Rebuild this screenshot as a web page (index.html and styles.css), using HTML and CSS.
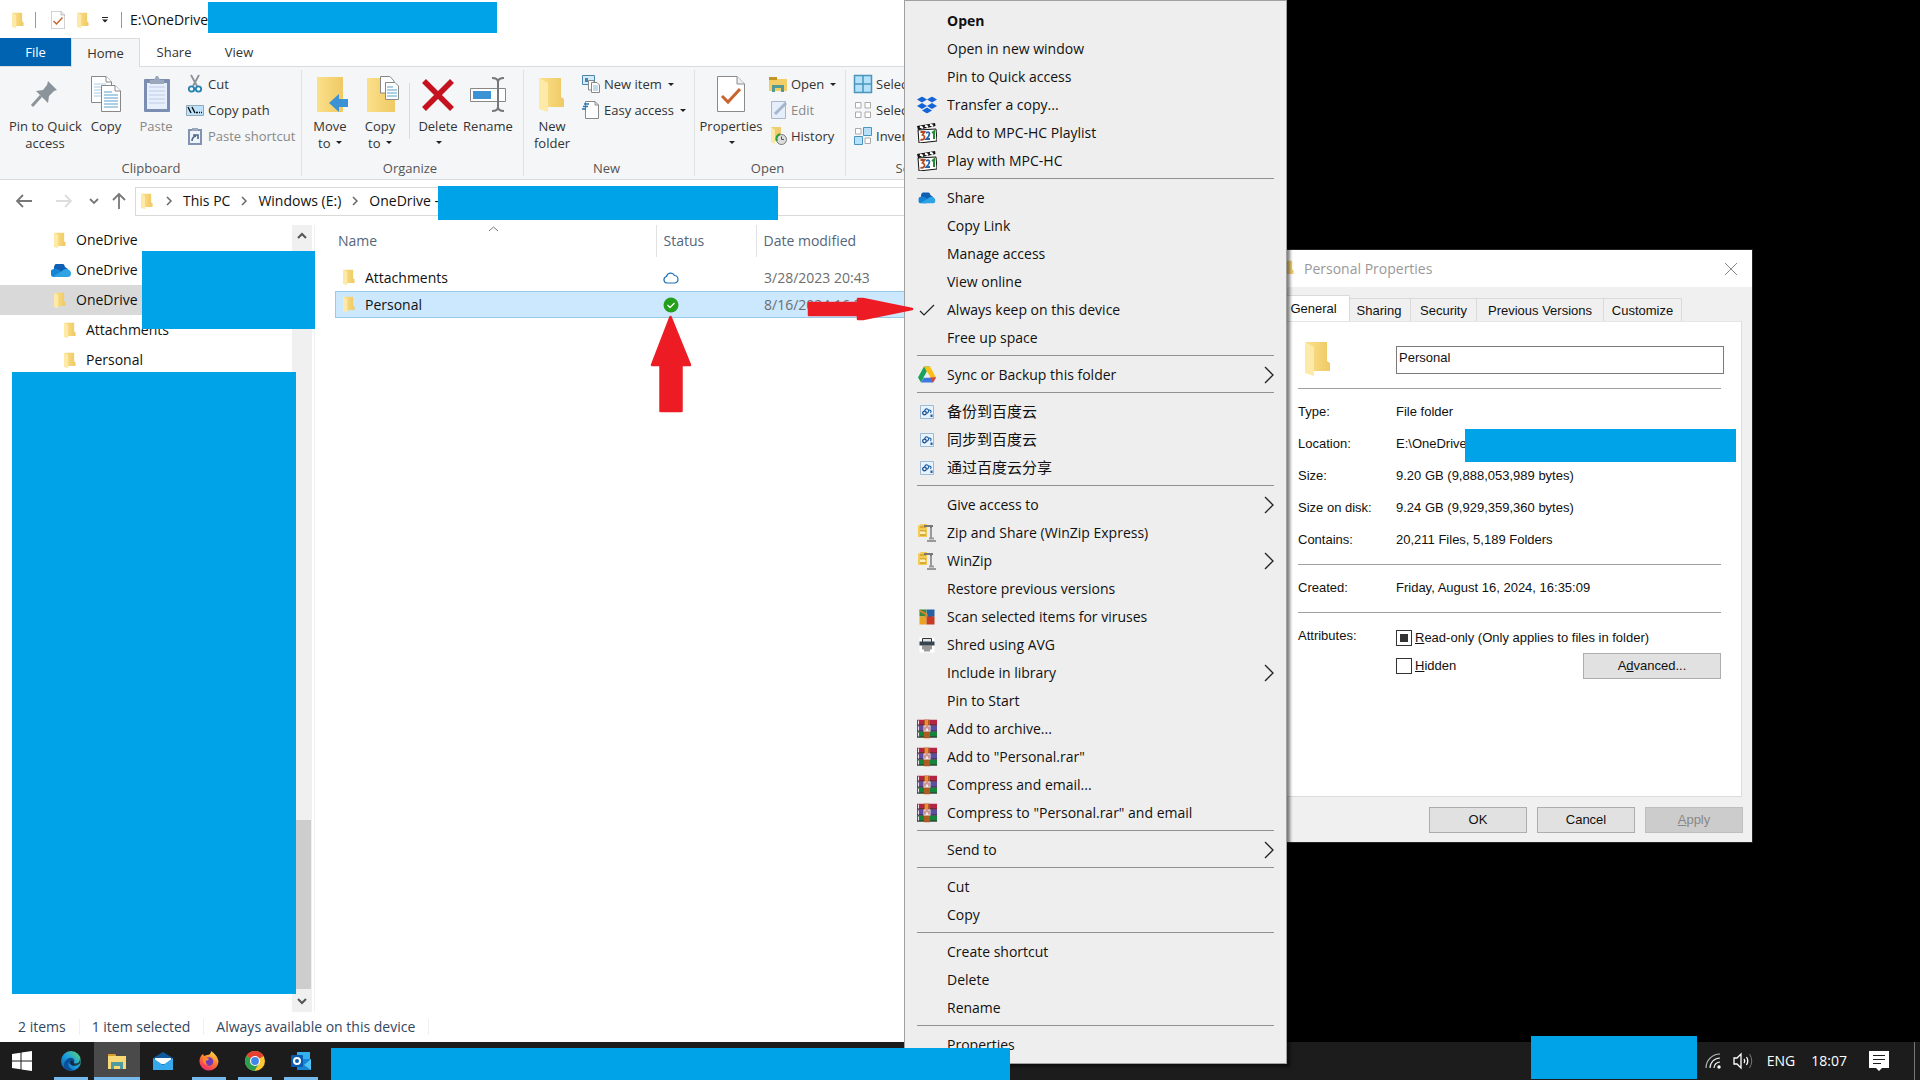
FILE: index.html
```html
<!DOCTYPE html>
<html lang="en">
<head>
<meta charset="utf-8">
<title>E:\OneDrive</title>
<link rel="stylesheet" href="styles.css">
</head>
<body>
<svg class="defs" aria-hidden="true">
  <defs>
    <linearGradient id="gf" x1="0" x2="1"><stop offset="0" stop-color="#fbe08a"/><stop offset="1" stop-color="#efc964"/></linearGradient>
    <linearGradient id="ge" x1="0" y1="1" x2="1" y2="0"><stop offset="0" stop-color="#0c59a4"/><stop offset=".5" stop-color="#1b9de2"/><stop offset="1" stop-color="#5fdc6a"/></linearGradient>
    <linearGradient id="gx" x1="0.8" y1="0" x2="0.3" y2="1"><stop offset="0" stop-color="#ffe14a"/><stop offset=".5" stop-color="#ff7a2e"/><stop offset="1" stop-color="#ee2a6d"/></linearGradient>
  </defs>
  <symbol id="folder" viewBox="0 0 26 34"><path d="M1 0H22V19L25 21V29H8Z" fill="url(#gf)"/><path d="M0 0L9 5V34L0 31Z" fill="#fdeaa9"/></symbol>
  <symbol id="sheetcheck" viewBox="0 0 28 36"><path d="M.5.5H20L27.500 8V35.500H.5Z" fill="#fff" stroke="#8a8a8a"/><path d="M20 .5V8H27.500" fill="#eee" stroke="#8a8a8a"/><path d="M5 20L11 26L23 13" fill="none" stroke="#c8642f" stroke-width="3"/></symbol>
  <symbol id="cloud" viewBox="0 0 20 13"><path d="M3 5A5.500 5.500 0 0 1 14 3L17 5L10 9L2 9Z" fill="#0f5fb3"/><path d="M4 13A4 4 0 0 1 3 5C7 4 9 7 14 10L9 13Z" fill="#1583d6"/><path d="M3 12L11 7C15 3 20 6 20 9.500A3.500 3.500 0 0 1 16.500 13H4Z" fill="#2ea3e4"/></symbol>
  <symbol id="mpc" viewBox="0 0 20 20"><path d="M1 7L19 6L20 18L2 20Z" fill="#fff" stroke="#111"/><path d="M0 3L18 0L18.500 3L1 7Z" fill="#111"/><path d="M3 3.500L6 5M8 2.500L11 4M13 1.500L16 3" stroke="#fff" stroke-width="2"/><path d="M3.500 9H7.500L5.500 12Q9 13 6.500 16.500L3.500 17" fill="none" stroke="#b8461d" stroke-width="1.800"/><path d="M9 10Q12 8 12.500 10.500Q12.500 13 9.500 16H13" fill="none" stroke="#2466ae" stroke-width="1.800"/><path d="M15 10L17 8.500V16" fill="none" stroke="#258a35" stroke-width="2"/></symbol>
  <symbol id="baidu" viewBox="0 0 14 14"><path d="M.5.5H13.500V13.500H.5Z" fill="#e8f3fc" stroke="#9dbbd6"/><circle cx="4.500" cy="8" r="1.800" fill="none" stroke="#1c4c8c" stroke-width="1.300"/><path d="M4.500 6Q6 2.500 8 4.500T6.500 8.500M9 5Q12 5 10.500 8M11 10H12V11.500H11Z" fill="none" stroke="#1d62a8" stroke-width="1.100"/></symbol>
  <symbol id="winzip" viewBox="0 0 18 18"><path d="M0 2L3 0H9V13H0Z" fill="#f3cb57"/><path d="M2 3H8M2 7H8M2 11H8" stroke="#c08a1d"/><path d="M2 7.500H7V10H2Z" fill="#fff2ba"/><path d="M6 1H15V3H14V13H12V3H6Z" fill="#777"/><path d="M13 4V14M9 17H18M11 14.500H16" stroke="#999" stroke-width="2"/></symbol>
  <symbol id="rar" viewBox="0 0 20 19"><path d="M0 0H20V6H0Z" fill="#b32542"/><path d="M0 6H20V12H0Z" fill="#5b4ea0"/><path d="M0 12H20V18H0Z" fill="#16833b"/><path d="M0 5.500H20M0 11.500H20M0 17.500H20" stroke="#3b2733"/><path d="M1.500 1V5M1.500 7V11M1.500 13V17" stroke="#e8dfe8"/><path d="M7 0H13V19H7Z" fill="#ad5b23"/><path d="M8 0H11V6H8Z" fill="#f28a3c"/><path d="M6.500 6H13.500V12H6.500Z" fill="#eee"/><path d="M8 7V11M12 7V11M10 6V9" stroke="#b23a3a"/></symbol>
  <symbol id="more" viewBox="0 0 10 18"><path d="M1 1L9 9L1 17" fill="none" stroke="#222" stroke-width="1.300"/></symbol>
  <symbol id="crumb" viewBox="0 0 6 10"><path d="M1 1L5 5L1 9" fill="none" stroke="#666" stroke-width="1.500"/></symbol>
  <symbol id="caret" viewBox="0 0 6 3"><path d="M0 0H6L3 3Z" fill="#222"/></symbol>
  <symbol id="dropbox" viewBox="0 0 20 17"><g fill="#1464d8"><path d="M5 0L10 3L5 6L0 3Z"/><path d="M15 0L20 3L15 6L10 3Z"/><path d="M5 6.500L10 9.500L5 12.500L0 9.500Z"/><path d="M15 6.500L20 9.500L15 12.500L10 9.500Z"/><path d="M10 11L15 14L10 17L5 14Z"/></g></symbol>
</svg>

<main class="desktop">
  <section class="explorer" aria-label="File Explorer">
    <header class="titlebar">
      <svg class="fold"><use href="#folder"/></svg>
      <i class="bar bar-a"></i>
      <svg class="qprop"><use href="#sheetcheck"/></svg>
      <svg class="fold"><use href="#folder"/></svg>
      <svg class="qcaret" viewBox="0 0 8 6"><path d="M1 .5H7" stroke="#222"/><path d="M1 2.500H7L4 5.500Z" fill="#222"/></svg>
      <i class="bar"></i>
      <span>E:\OneDrive</span>
    </header>
    <nav class="tabs">
      <button class="tab file">File</button><button class="tab home">Home</button><button class="tab">Share</button><button class="tab view">View</button>
    </nav>
    <div class="ribbon">
      <div class="group clipboard">
        <div class="tools">
          <button class="big pin"><svg viewBox="0 0 36 36"><path d="M21 5L30 14L27 15L22 20L21 27L9 15L16 14L20 9Z" fill="#8b949b"/><path d="M14 20L5 30" stroke="#8b949b" stroke-width="3"/></svg>Pin to Quick<br>access</button>
          <button class="big"><svg viewBox="0 0 36 36"><g fill="#fff" stroke="#888"><path d="M3.500.5H18L23.500 6V26.500H3.500Z"/><path d="M18 .5V6H23.500"/></g><path d="M6 8H18M6 11H18M6 14H18M6 17H18M6 20H14" stroke="#a8cbe6"/><g fill="#fff" stroke="#888"><path d="M13.500 9.500H27L32.500 15V35.500H13.500Z"/><path d="M27 9.500V15H32.500"/></g><path d="M16 16H24M16 19H30M16 22H30M16 25H30M16 28H30M16 31H30" stroke="#5b9fcc"/></svg>Copy</button>
          <button class="big dim"><svg viewBox="0 0 36 36"><rect x="6" y="3" width="26" height="33" rx="1" fill="#7b8db0"/><path d="M9 7H29V33H9Z" fill="#e8effc"/><path d="M11 11H27M11 15H27M11 19H27M11 23H27M11 27H27" stroke="#bccbe6"/><path d="M12 8V4H16L18 0H20L22 4H26V8Z" fill="#9aa7bd"/></svg>Paste</button>
          <div class="stack">
            <button class="small"><svg viewBox="0 0 18 18"><path d="M5 0L11 11M13 0L7 11" stroke="#8b9299" stroke-width="1.800"/><circle cx="5.500" cy="14" r="2.700" fill="none" stroke="#2482b0" stroke-width="1.800"/><circle cx="12.500" cy="14" r="2.700" fill="none" stroke="#2482b0" stroke-width="1.800"/></svg>Cut</button>
            <button class="small"><svg viewBox="0 0 18 18"><path d="M.5 4.500H17.500V14.500H.5Z" fill="#bfe2fa" stroke="#8fa9bd"/><path d="M2 6L5 12M6 6L9 12" stroke="#111" stroke-width="1.400"/><path d="M10 11.500H12M13 11.500H14M15 11.500H16" stroke="#111" stroke-width="1.300"/></svg>Copy path</button>
            <button class="small dim"><svg viewBox="0 0 18 18"><path d="M2 2H16V18H2Z" fill="#8193b2"/><path d="M4 4H14V16H4Z" fill="#eef3fc"/><path d="M6 1H12V4H6Z" fill="#9ba7ba"/><path d="M6 14Q6 10 10 9M7 8H12V12" fill="none" stroke="#526784" stroke-width="1.600"/></svg>Paste shortcut</button>
          </div>
        </div>
        <div class="caption">Clipboard</div>
      </div>
      <div class="group organize">
        <div class="tools">
          <button class="big"><svg viewBox="0 0 36 36"><path d="M5 1H31V36H5Z" fill="url(#gf)"/><path d="M17 27L27 18V23H36V31H27V36Z" fill="#3b93d6"/></svg>Move<br>to <svg class="caret"><use href="#caret"/></svg></button>
          <button class="big"><svg viewBox="0 0 36 36"><path d="M5 2H28V24H33V36H5Z" fill="url(#gf)"/><path d="M18.500.5H28L32 5V17H18.500Z" fill="#fff" stroke="#888"/><path d="M23.500 6.500H33L36.500 10V23.500H23.500Z" fill="#fff" stroke="#888"/><path d="M25 11H31M25 14H35M25 17H35M25 20H35" stroke="#5b9fcc"/></svg>Copy<br>to <svg class="caret"><use href="#caret"/></svg></button>
          <i class="split"></i>
          <button class="big"><svg viewBox="0 0 36 36"><path d="M4 5L32 33M32 5L4 33" stroke="#c4121f" stroke-width="5.500"/></svg>Delete<br><svg class="caret"><use href="#caret"/></svg></button>
          <button class="big"><svg viewBox="0 0 36 36"><path d="M.5 12.500H35.500V25.500H.5Z" fill="#fff" stroke="#888"/><path d="M3 15H21V23H3Z" fill="#3b93d6"/><path d="M22 2Q28 2 28 6V31Q28 35 22 35M34 2Q28 2 28 6M28 31Q28 35 34 35" fill="none" stroke="#777" stroke-width="2"/></svg>Rename</button>
        </div>
        <div class="caption">Organize</div>
      </div>
      <div class="group new">
        <div class="tools">
          <button class="big"><svg viewBox="0 0 36 36"><g transform="translate(5 2)"><path d="M1 0H22V19L25 21V29H8Z" fill="url(#gf)"/><path d="M0 0L9 5V34L0 31Z" fill="#fdeaa9"/></g></svg>New<br>folder</button>
          <div class="stack">
            <button class="small"><svg viewBox="0 0 18 18"><path d="M.5.5H12.500V9.500H.5Z" fill="#d5ebf8" stroke="#4787ae"/><path d="M3 3H6V7H3Z" fill="#4787ae"/><path d="M6.500 5.500H12V15H6.500Z" fill="#fff" stroke="#888"/><path d="M9.500 7.500H15L17.500 10V17.500H9.500Z" fill="#fff" stroke="#888"/><path d="M11 11H16M11 13H16M11 15H16" stroke="#8ab5d5"/></svg>New item <svg class="caret"><use href="#caret"/></svg></button>
            <button class="small"><svg viewBox="0 0 18 18"><path d="M3.500.5H13L16.500 4V17.500H3.500Z" fill="#fff" stroke="#888"/><path d="M13 .5V4H16.500" fill="none" stroke="#888"/><path d="M2 3H7M1 5.500H6M0 8H4" stroke="#2774ae" stroke-width="1.300"/></svg>Easy access <svg class="caret"><use href="#caret"/></svg></button>
          </div>
        </div>
        <div class="caption">New</div>
      </div>
      <div class="group open">
        <div class="tools">
          <button class="big props-btn"><svg><use href="#sheetcheck"/></svg>Properties<br><svg class="caret"><use href="#caret"/></svg></button>
          <div class="stack">
            <button class="small"><svg viewBox="0 0 18 18"><path d="M0 2H8V4H18V16H0Z" fill="#f2cf66"/><path d="M0 2H8V5H0Z" fill="#c29527"/><path d="M3 10H15V17H12V13H6V17H3Z" fill="#559997"/></svg>Open <svg class="caret"><use href="#caret"/></svg></button>
            <button class="small dim"><svg viewBox="0 0 18 18"><path d="M2.500.5H16.500V17.500H2.500Z" fill="#e7eefb" stroke="#a9b6cc"/><path d="M6 13L17 2" stroke="#a5b5ce" stroke-width="3"/></svg>Edit</button>
            <button class="small"><svg viewBox="0 0 18 18"><path d="M2 0H12V14H2Z" fill="#efcd70"/><path d="M2 0L6 3V17L2 15Z" fill="#fbe9aa"/><circle cx="12.500" cy="12.500" r="5" fill="#ddd" stroke="#777"/><path d="M12.500 9.500V12.500H15" stroke="#555" fill="none"/><path d="M11 7Q6 9 8 14" fill="none" stroke="#2ea03a" stroke-width="2"/></svg>History</button>
          </div>
        </div>
        <div class="caption">Open</div>
      </div>
      <div class="group select">
        <div class="tools">
          <div class="stack">
            <button class="small"><svg viewBox="0 0 18 18"><path d="M.5.5H17.500V17.500H.5ZM9 0V18M0 9H18" fill="#b5e2fa" stroke="#4a95bd" stroke-width="1.500"/></svg>Select all</button>
            <button class="small"><svg viewBox="0 0 18 18"><path d="M1.500 1.500H7V7H1.500ZM11 1.500H16.500V7H11ZM1.500 11H7V16.500H1.500ZM11 11H16.500V16.500H11Z" fill="#fff" stroke="#aaa"/></svg>Select none</button>
            <button class="small"><svg viewBox="0 0 18 18"><path d="M1.500 1.500H7V7H1.500ZM11 11H16.500V16.500H11Z" fill="#fff" stroke="#aaa"/><path d="M9.500.5H17.500V8.500H9.500ZM.5 9.500H8.500V17.500H.5Z" fill="#b5e2fa" stroke="#4a95bd"/></svg>Invert selection</button>
          </div>
        </div>
        <div class="caption">Select</div>
      </div>
    </div>
    <div class="navrow">
      <button aria-label="Back"><svg width="16" height="14" viewBox="0 0 16 14"><path d="M7 1L1 7L7 13M1 7H16" fill="none" stroke="#777" stroke-width="1.800"/></svg></button>
      <button aria-label="Forward"><svg width="16" height="14" viewBox="0 0 16 14"><path d="M9 1L15 7L9 13M15 7H0" fill="none" stroke="#ddd" stroke-width="1.800"/></svg></button>
      <button aria-label="Recent"><svg width="8" height="6" viewBox="0 0 8 6"><path d="M0 1L4 5L8 1" fill="none" stroke="#777" stroke-width="1.800"/></svg></button>
      <button aria-label="Up"><svg width="12" height="16" viewBox="0 0 12 16"><path d="M0 7L6 1L12 7M6 1V16" fill="none" stroke="#777" stroke-width="1.800"/></svg></button>
      <div class="address">
        <svg class="fold"><use href="#folder"/></svg>
        <svg class="crumb"><use href="#crumb"/></svg><a href="#pc">This PC</a>
        <svg class="crumb"><use href="#crumb"/></svg><a href="#e">Windows (E:)</a>
        <svg class="crumb"><use href="#crumb"/></svg><a href="#od">OneDrive -</a>
      </div>
    </div>
    <div class="body">
      <ul class="tree">
        <li><a href="#t1"><svg class="fold"><use href="#folder"/></svg>OneDrive</a></li>
        <li><a class="cloudrow" href="#t2"><svg class="cloud"><use href="#cloud"/></svg>OneDrive</a></li>
        <li><a class="current" href="#t3"><svg class="fold"><use href="#folder"/></svg>OneDrive</a></li>
        <li><a class="child" href="#t4"><svg class="fold"><use href="#folder"/></svg>Attachments</a></li>
        <li><a class="child" href="#t5"><svg class="fold"><use href="#folder"/></svg>Personal</a></li>
      </ul>
      <div class="scroll">
        <svg width="10" height="7" viewBox="0 0 10 7"><path d="M1 6L5 2L9 6" fill="none" stroke="#555" stroke-width="2"/></svg>
        <i class="thumb"></i>
        <svg width="10" height="7" viewBox="0 0 10 7"><path d="M1 1L5 5L9 1" fill="none" stroke="#555" stroke-width="2"/></svg>
      </div>
      <div class="files">
        <table>
          <thead><tr><th class="c-name">Name<svg class="sort" viewBox="0 0 9 5"><path d="M0 5L4.500 1L9 5" fill="none" stroke="#777"/></svg></th><th class="c-status">Status</th><th>Date modified</th></tr></thead>
          <tbody>
            <tr><td class="name"><svg class="fold"><use href="#folder"/></svg>Attachments</td><td><svg class="state" viewBox="0 0 16 16"><path d="M4 13A3.300 3.300 0 0 1 3.500 6.500A4.300 4.300 0 0 1 11.500 5.500A3.800 3.800 0 0 1 12 13Z" fill="#fff" stroke="#1e70b5" stroke-width="1.200"/></svg></td><td class="date">3/28/2023 20:43</td></tr>
            <tr class="sel"><td class="name"><svg class="fold"><use href="#folder"/></svg>Personal</td><td><svg class="state" viewBox="0 0 16 16"><circle cx="8" cy="8" r="7.500" fill="#25a01c"/><path d="M4.500 8L7 10.500L11.500 6" fill="none" stroke="#fff" stroke-width="1.300"/></svg></td><td class="date">8/16/2024 16:35</td></tr>
          </tbody>
        </table>
      </div>
    </div>
    <footer class="status"><span>2 items</span><span>1 item selected</span><span>Always available on this device</span></footer>
  </section>

  <section class="dialog" aria-label="Personal Properties">
    <header class="dtitle"><svg class="fold"><use href="#folder"/></svg><span>Personal Properties</span><button aria-label="Close"><svg width="12" height="12" viewBox="0 0 12 12"><path d="M0 0L12 12M12 0L0 12" stroke="#888"/></svg></button></header>
    <div class="dtabs"><button class="on">General</button><button class="t-sh">Sharing</button><button class="t-se">Security</button><button class="t-pv">Previous Versions</button><button class="t-cu">Customize</button></div>
    <form class="panel">
      <div class="row head"><svg class="bigfold"><use href="#folder"/></svg><input class="fname" type="text" aria-label="Folder name" value="Personal"></div>
      <hr>
      <dl>
        <dt>Type:</dt><dd>File folder</dd>
        <dt>Location:</dt><dd>E:\OneDrive</dd>
        <dt>Size:</dt><dd>9.20 GB (9,888,053,989 bytes)</dd>
        <dt>Size on disk:</dt><dd>9.24 GB (9,929,359,360 bytes)</dd>
        <dt>Contains:</dt><dd>20,211 Files, 5,189 Folders</dd>
      </dl>
      <hr>
      <dl><dt>Created:</dt><dd>Friday, August 16, 2024, 16:35:09</dd></dl>
      <hr>
      <div class="row attrs">
        <span class="alabel">Attributes:</span>
        <div class="checks">
          <label><input class="mixed" type="checkbox" checked><span><u>R</u>ead-only (Only applies to files in folder)</span></label>
          <div class="hid"><label><input type="checkbox"><span><u>H</u>idden</span></label><button type="button" class="btn adv">A<u>d</u>vanced...</button></div>
        </div>
      </div>
    </form>
    <div class="actions"><button class="btn">OK</button><button class="btn">Cancel</button><button class="btn" disabled><u>A</u>pply</button></div>
  </section>

  <footer class="taskbar">
    <button class="start" aria-label="Start"><svg viewBox="0 0 20 20"><path d="M0 3L8.500 1.800V9.500H0ZM9.500 1.600L20 0V9.500H9.500ZM0 10.500H8.500V18.200L0 17ZM9.500 10.500H20V20L9.500 18.400Z" fill="#fff"/></svg></button>
    <button class="app run" aria-label="Edge"><svg viewBox="0 0 20 20"><circle cx="10" cy="10" r="10" fill="url(#ge)"/><path d="M3 16A9 9 0 0 1 8 7Q13 6 13.500 10Q12 13 14 14Q9 15 7.500 11Q6 17 13 19.500Q6 21 3 16Z" fill="#0b4f99"/><path d="M10 9Q8 13 12 15Q17 15 19.500 12Q20 9 19 7Q19 12 15 12.500Q11 12 12.500 10Z" fill="#1c1c1c" opacity=".75"/></svg></button>
    <button class="app active" aria-label="File Explorer"><svg viewBox="0 0 20 20"><path d="M1 3H8L9 5H19V18H1Z" fill="#f8d775"/><path d="M1 3H8L9 5H1Z" fill="#d99e25"/><path d="M4 11H16V18H13V15H7V18H4Z" fill="#4e9ba0"/></svg></button>
    <button class="app" aria-label="Mail"><svg viewBox="0 0 20 20"><path d="M0 7L10 1L20 7V19H0Z" fill="#0f5a9c"/><path d="M2 7H18V13H2Z" fill="#fff"/><path d="M0 7L10 14L20 7V19H0Z" fill="#35a9ec"/></svg></button>
    <button class="app run" aria-label="Firefox"><svg viewBox="0 0 20 20"><path d="M12 0Q18 4 19.500 10A9.500 9.500 0 1 1 1 7Q2 4 4 3L5 5L8 4Q12 4 12 0Z" fill="url(#gx)"/><circle cx="10" cy="10.500" r="4.300" fill="#733bb8"/><path d="M4 6Q8 6 10 8Q9 10 7 9.500Q6 12 9 14Q5 14 4 10Z" fill="#ff8a2c"/></svg></button>
    <button class="app run" aria-label="Chrome"><svg viewBox="0 0 20 20"><circle cx="10" cy="10" r="10" fill="#fcc934"/><path d="M10 10L1.300 5A10 10 0 0 1 18.700 5Z" fill="#e5412f"/><path d="M10 10L1.300 5A10 10 0 0 0 9.500 20L14 12Z" fill="#2f9e4f"/><circle cx="10" cy="10" r="5" fill="#fff"/><circle cx="10" cy="10" r="3.900" fill="#4285e8"/></svg></button>
    <button class="app run" aria-label="Outlook"><svg viewBox="0 0 20 20"><path d="M6 1H19V10H6Z" fill="#35b0ee"/><path d="M6 8H20V19H6Z" fill="#1684d2"/><path d="M13 14L20 8V19Z" fill="#50c4f5"/><rect y="4" width="12" height="12" rx="1" fill="#0a5bb0"/><circle cx="6" cy="10" r="3" fill="none" stroke="#fff" stroke-width="2"/></svg></button>
    <div class="tray">
      <svg width="16" height="16" viewBox="0 0 16 16"><g fill="none" stroke="#eee" stroke-width="1.200"><path d="M1 15A14 14 0 0 1 15 1" stroke="#bbb"/><path d="M5 15A10 10 0 0 1 15 5"/><path d="M9 15A6 6 0 0 1 15 9"/></g><circle cx="14" cy="14" r="1.700" fill="#fff"/></svg>
      <svg width="20" height="18" viewBox="0 0 20 18"><path d="M1 6H4L8 2V16L4 12H1Z" fill="none" stroke="#fff" stroke-width="1.300"/><path d="M11 7Q12.500 9 11 11M13.500 5Q16 9 13.500 13" fill="none" stroke="#fff" stroke-width="1.300"/><path d="M16.500 2Q21 9 16.500 16" fill="none" stroke="#777"/></svg>
      <span>ENG</span><span class="clock">18:07</span>
      <button aria-label="Notifications"><svg width="20" height="20" viewBox="0 0 20 20"><path d="M0 0H20V17H13L10 20L7 17H0Z" fill="#fff"/><path d="M4 4.500H16M4 8.500H16M4 12.500H12" stroke="#1c1c1c" stroke-width="1.200"/></svg></button>
    </div>
  </footer>

  <ul class="menu">
    <li><button><b>Open</b></button></li>
    <li><button>Open in new window</button></li>
    <li><button>Pin to Quick access</button></li>
    <li><button><svg class="glyph" width="20" height="17"><use href="#dropbox"/></svg>Transfer a copy...</button></li>
    <li><button><svg class="glyph" width="20" height="20"><use href="#mpc"/></svg>Add to MPC-HC Playlist</button></li>
    <li><button><svg class="glyph" width="20" height="20"><use href="#mpc"/></svg>Play with MPC-HC</button></li>
    <li class="sep"></li>
    <li><button><svg class="glyph" width="17" height="11"><use href="#cloud"/></svg>Share</button></li>
    <li><button>Copy Link</button></li>
    <li><button>Manage access</button></li>
    <li><button>View online</button></li>
    <li><button><svg class="glyph" width="16" height="12" viewBox="0 0 16 12"><path d="M1 7L5 11L15 1" fill="none" stroke="#222" stroke-width="1.200"/></svg>Always keep on this device</button></li>
    <li><button>Free up space</button></li>
    <li class="sep"></li>
    <li><button><svg class="glyph" width="18" height="17" viewBox="0 0 18 17"><path d="M6 0H12L9 5L3 16L0 11Z" fill="#19a35a"/><path d="M6 0H12L18 11H12Z" fill="#fbbf17"/><path d="M3 16L6 11H18L15 16Z" fill="#3b78e0"/><path d="M12 11H18L15 16Z" fill="#e34434"/><path d="M9 5L12.500 11H5.500Z" fill="#eee"/></svg>Sync or Backup this folder<svg class="more"><use href="#more"/></svg></button></li>
    <li class="sep"></li>
    <li lang="zh"><button><svg class="glyph" width="14" height="14"><use href="#baidu"/></svg>备份到百度云</button></li>
    <li lang="zh"><button><svg class="glyph" width="14" height="14"><use href="#baidu"/></svg>同步到百度云</button></li>
    <li lang="zh"><button><svg class="glyph" width="14" height="14"><use href="#baidu"/></svg>通过百度云分享</button></li>
    <li class="sep"></li>
    <li><button>Give access to<svg class="more"><use href="#more"/></svg></button></li>
    <li><button><svg class="glyph" width="18" height="18"><use href="#winzip"/></svg>Zip and Share (WinZip Express)</button></li>
    <li><button><svg class="glyph" width="18" height="18"><use href="#winzip"/></svg>WinZip<svg class="more"><use href="#more"/></svg></button></li>
    <li><button>Restore previous versions</button></li>
    <li><button><svg class="glyph" width="15" height="15" viewBox="0 0 15 15"><path d="M0 0H7V7H0Z" fill="#3b873d"/><path d="M7 0H15V7L8 8Z" fill="#2461a5"/><path d="M0 7H7V15H0Z" fill="#e8a325"/><path d="M7 7H15V15H7Z" fill="#c53b24"/><path d="M0 1L7 5L6 8" fill="none" stroke="#e0842b" stroke-width="2"/></svg>Scan selected items for viruses</button></li>
    <li><button><svg class="glyph" width="15" height="15" viewBox="0 0 15 15"><path d="M0 0H15V15H0Z" fill="#fff"/><path d="M3 1H12V5H3Z" fill="#dde5ea" stroke="#333"/><path d="M0 4H15V8H0Z" fill="#37434d"/><path d="M3.500 8V12M5.500 8V14M7.500 8V14M9.500 8V14M11.500 8V12" stroke="#333"/></svg>Shred using AVG</button></li>
    <li><button>Include in library<svg class="more"><use href="#more"/></svg></button></li>
    <li><button>Pin to Start</button></li>
    <li><button><svg class="glyph" width="20" height="19"><use href="#rar"/></svg>Add to archive...</button></li>
    <li><button><svg class="glyph" width="20" height="19"><use href="#rar"/></svg>Add to "Personal.rar"</button></li>
    <li><button><svg class="glyph" width="20" height="19"><use href="#rar"/></svg>Compress and email...</button></li>
    <li><button><svg class="glyph" width="20" height="19"><use href="#rar"/></svg>Compress to "Personal.rar" and email</button></li>
    <li class="sep"></li>
    <li><button>Send to<svg class="more"><use href="#more"/></svg></button></li>
    <li class="sep"></li>
    <li><button>Cut</button></li>
    <li><button>Copy</button></li>
    <li class="sep"></li>
    <li><button>Create shortcut</button></li>
    <li><button>Delete</button></li>
    <li><button>Rename</button></li>
    <li class="sep"></li>
    <li><button>Properties</button></li>
  </ul>

  <i class="mask m-title"></i><i class="mask m-addr"></i><i class="mask m-tree"></i><i class="mask m-list"></i><i class="mask m-loc"></i><i class="mask m-task"></i><i class="mask m-tray"></i>
  <svg class="arrow-up" viewBox="0 0 42 98"><path d="M20.500 2L40 50H31.500V96H10.500V50H2Z" fill="#ed1c24" stroke="#ed1c24" stroke-width="2.500" stroke-linejoin="round"/></svg>
  <svg class="arrow-right" viewBox="0 0 108 24"><path d="M2 6H51V2H56L105 12L56 22H51V18H2Z" fill="#ed1c24" stroke="#ed1c24" stroke-width="2.500" stroke-linejoin="round"/></svg>
</main>
</body>
</html>
```
FILE: styles.css
```css
* { box-sizing: border-box; }
html, body { height: 100%; margin: 0; }
body { background: #000; font: 14px/20px "Open Sans", "Noto Sans", "Noto Sans CJK SC", sans-serif; color: #111; overflow: hidden; }
button { border: 0; padding: 0; margin: 0; background: none; font: inherit; color: inherit; }
a { color: inherit; text-decoration: none; }
ul, dl, dd { margin: 0; padding: 0; list-style: none; }
svg { flex: none; overflow: visible; }
.defs { position: absolute; width: 0; height: 0; }
.desktop { position: relative; height: 100%; overflow: hidden; }

/* Explorer window */
.explorer { position: absolute; left: 0; top: 0; bottom: 38px; width: 48%; background: #fff; display: flex; flex-direction: column; overflow: hidden; }
.fold { width: 12px; height: 17px; }
.titlebar { height: 38px; display: flex; align-items: center; padding: 2px 0 0 12px; flex: none; }
.bar { width: 1px; height: 16px; background: #999; margin-right: 8px; }
.bar-a { margin: 0 15px 0 11px; }
.qprop { width: 14px; height: 18px; margin-right: 12px; }
.qcaret { width: 8px; height: 6px; margin: 0 12px; }
.tabs { display: flex; height: 29px; flex: none; border-bottom: 1px solid #dadbdc; font-size: 13px; color: #333; }
.tab { width: 68px; }
.file { width: 71px; background: #0063b1; color: #fff; }
.home { background: #f5f6f7; border: 1px solid #dadbdc; border-bottom: 0; height: 29px; width: 69px; }
.view { width: 62px; }
.ribbon { display: flex; height: 113px; flex: none; background: #f5f6f7; border-bottom: 1px solid #dadbdc; font-size: 13px; line-height: 17px; color: #333; }
.group { flex: none; display: flex; flex-direction: column; position: relative; border-right: 1px solid #e0e1e2; margin: 3px 0; }
.clipboard { width: 302px; padding-left: 9px; }
.organize { width: 222px; padding-left: 3px; }
.new { width: 171px; padding-left: 3px; }
.open { width: 151px; padding-left: 3px; }
.select { width: 136px; padding-left: 8px; }
.tools { display: flex; flex: 1; padding-top: 5px; }
.big { width: 50px; display: block; align-self: flex-start; text-align: center; white-space: nowrap; }
.big > svg:first-child { display: block; width: 36px; height: 36px; margin: 1px auto 6px; }
.pin { width: 72px; }
.props-btn { width: 66px; }
.big.props-btn > svg:first-child { width: 28px; }
.caret { width: 6px; height: 3px; margin-left: 2px; vertical-align: 4px; }
.split { width: 1px; height: 56px; background: #dadbdc; margin: 8px 3px 0 4px; }
.dim { color: #888; }
.stack { margin-left: 5px; display: flex; flex-direction: column; gap: 8px; }
.select .stack { margin-left: 0; }
.small { display: flex; align-items: center; gap: 4px; height: 18px; white-space: nowrap; }
.small > svg:first-child { width: 18px; height: 18px; }
.caption { text-align: center; color: #555; height: 16px; padding-right: 8px; line-height: 16px; }
.navrow { display: flex; align-items: center; height: 45px; flex: none; padding: 0 0 3px 16px; }
.navrow > button { display: flex; margin-right: 24px; }
.navrow > button:nth-child(2) { margin-right: 18px; }
.navrow > button:nth-child(3) { margin-right: 15px; }
.navrow > button:nth-child(4) { margin-right: 10px; }
.address { flex: 1; height: 29px; border: 1px solid #d9d9d9; display: flex; align-items: center; padding-left: 5px; }
.crumb { width: 6px; height: 10px; margin: 0 11px; }
.address .fold + .crumb { margin-left: 13px; }
.body { flex: 1; display: flex; min-height: 0; }
.tree { width: 292px; flex: none; }
.tree a { display: flex; align-items: center; gap: 10px; height: 30px; padding-left: 54px; }
.tree .cloudrow { padding-left: 51px; gap: 5px; }
.tree .child { padding-left: 64px; }
.tree .current { background: #d9d9d9; }
.cloud { width: 20px; height: 13px; }
.scroll { width: 20px; background: #f0f0f0; display: flex; flex-direction: column; align-items: center; padding: 7px 0; }
.thumb { width: 18px; height: 169px; margin: auto 0 9px; background: #cdcdcd; }
.files { flex: 1; margin-left: 2px; padding-left: 20px; border-left: 1px solid #f0f0f0; }
table { width: 100%; table-layout: fixed; border-collapse: collapse; }
th { height: 32px; padding: 0 0 0 7px; text-align: left; font-weight: 400; color: #56657a; }
th + th { border-left: 1px solid #e2e2e2; }
.c-name { width: 321px; padding-left: 3px; position: relative; }
.sort { position: absolute; left: 154px; top: 1px; width: 9px; height: 5px; }
.c-status { width: 100px; }
tbody::before { content: ""; display: block; height: 7px; }
td { height: 27px; padding: 0 0 0 7px; }
td.name { display: flex; align-items: center; gap: 10px; padding-left: 8px; }
.state { display: block; width: 16px; height: 16px; }
.date { color: #6d6d6d; padding-left: 8px; }
.sel { background: #cce8ff; box-shadow: inset 0 0 0 1px #99cbe8; }
.status { height: 30px; flex: none; display: flex; align-items: center; padding-left: 18px; color: #33475f; }
.status span { padding-right: 13px; margin-right: 12px; border-right: 1px solid #f0f0f0; line-height: 16px; }

/* Context menu */
.menu { position: absolute; left: 904px; top: 0; width: 383px; padding: 6px 12px 4px; background: #eee; border: 1px solid #a0a0a0; box-shadow: 3px 3px 3px rgba(0, 0, 0, .5); }
.menu button { position: relative; display: flex; align-items: center; width: 100%; height: 28px; padding-left: 30px; text-align: left; }
.glyph { position: absolute; left: 10px; top: 50%; transform: translate(-50%, -50%); }
.more { width: 10px; height: 18px; margin-left: auto; }
.menu [lang="zh"] { font-family: "Noto Sans CJK SC", sans-serif; font-size: 15px; }
.menu [lang="zh"] button { padding-bottom: 2px; }
.sep { height: 4px; border-bottom: 1px solid #919191; margin-bottom: 5px; }

/* Properties dialog */
.dialog { position: absolute; left: 1272px; top: 250px; width: 480px; background: #f0f0f0; font: 13px/16px "Liberation Sans", sans-serif; padding: 0 10px 9px; box-shadow: 0 0 0 1px #222; }
.dtitle { display: flex; align-items: center; height: 37px; margin: 0 -10px; padding: 0 15px 0 10px; background: #fff; color: #999; font: 14px/20px "Open Sans", sans-serif; }
.dtitle span { margin-left: 10px; }
.dtitle button { display: flex; margin-left: auto; }
.dtabs { display: flex; align-items: flex-end; height: 34px; padding-left: 2px; }
.dtabs button { height: 23px; padding-top: 2px; border: 1px solid #dadada; border-left: 0; border-bottom: 0; white-space: nowrap; }
.dtabs .on { height: 26px; width: 66px; background: #fff; padding: 0 6px 0 0; }
.dtabs .t-sh { width: 61px; padding-right: 2px; }
.t-se { width: 66px; }
.t-pv { width: 127px; }
.t-cu { width: 78px; }
.panel { background: #fff; border: 1px solid #dcdcdc; border-top-color: #e5e5e5; height: 476px; padding: 20px 20px 0 15px; }
.row { display: flex; }
.head { padding-left: 7px; height: 38px; }
.bigfold { width: 26px; height: 34px; margin-right: 65px; }
.fname { flex: 1; margin: 4px -3px 0 0; height: 28px; border: 1px solid #7a7a7a; padding: 0 2px 6px; font: inherit; color: inherit; background: #fff; }
hr { border: 0; height: 1px; background: #a0a0a0; margin: 8px 0 7px; }
dl { display: grid; grid-template-columns: 98px 1fr; grid-auto-rows: 32px; align-items: center; }
.alabel { width: 98px; line-height: 32px; }
.checks { flex: 1; padding-top: 4px; }
.checks label { display: flex; align-items: center; gap: 3px; height: 28px; }
.hid { display: flex; justify-content: space-between; align-items: center; }
input[type="checkbox"] { appearance: none; width: 16px; height: 16px; margin: 0; border: 1px solid #333; background: #fff; }
.mixed:checked { background: #333 content-box; padding: 3px; }
.btn { width: 98px; height: 26px; border: 1px solid #adadad; background: #e1e1e1; }
.adv { width: 138px; }
.btn:disabled { background: #ccc; border-color: #bfbfbf; color: #888; }
.actions { display: flex; justify-content: flex-end; gap: 10px; padding-top: 10px; margin-right: -1px; }

/* Taskbar */
.taskbar { position: absolute; left: 0; right: 0; bottom: 0; height: 38px; background: #1c1c1c; display: flex; color: #fff; }
.start { width: 48px; padding-right: 4px; }
.start svg, .app svg { display: block; width: 20px; height: 20px; margin: 0 auto; }
.app { width: 46px; padding: 0 6px; }
.run { background: linear-gradient(#76b9ed, #76b9ed) 6px 100% / 34px 3px no-repeat; }
.active { background: #4a4a4a; border-bottom: 3px solid #76b9ed; padding-top: 3px; }
.tray { margin-left: auto; display: flex; align-items: center; padding-right: 25px; margin-right: 5px; border-right: 1px solid #777; }
.tray svg + svg { margin: 0 14px 0 12px; }
.clock { margin: 0 22px 0 16px; }
.tray button svg { display: block; }

/* Cover blocks and pointers */
.mask { position: absolute; background: #00a2e8; }
.m-title { left: 208px; top: 2px; width: 289px; height: 31px; }
.m-addr { left: 438px; top: 186px; width: 340px; height: 34px; }
.m-tree { left: 142px; top: 251px; width: 173px; height: 78px; }
.m-list { left: 12px; top: 372px; width: 284px; height: 622px; }
.m-loc { left: 1465px; top: 429px; width: 271px; height: 33px; }
.m-task { left: 331px; top: 1048px; width: 679px; height: 32px; }
.m-tray { left: 1531px; top: 1036px; width: 166px; height: 43px; }
.arrow-up { position: absolute; left: 650px; top: 315px; width: 42px; height: 98px; }
.arrow-right { position: absolute; left: 807px; top: 297px; width: 108px; height: 24px; }
```
